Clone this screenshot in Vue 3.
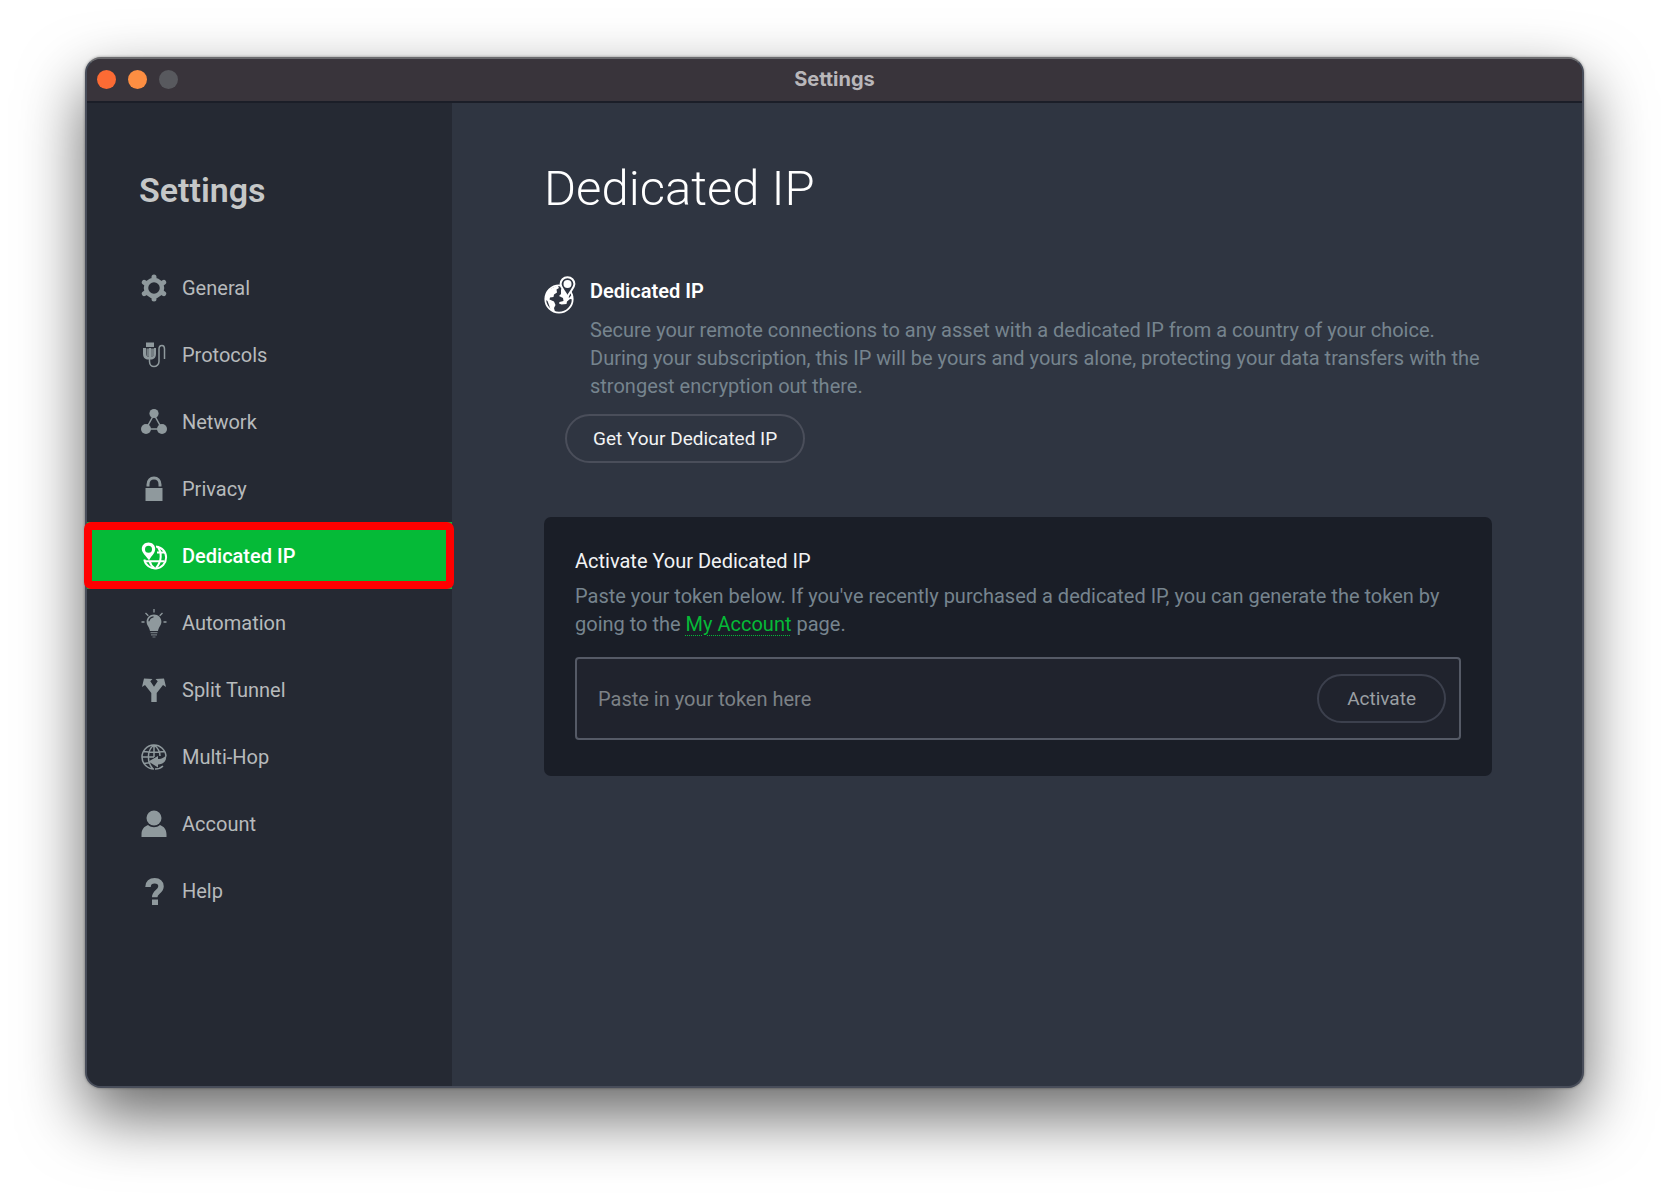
<script setup>
import { ref } from 'vue'

const token = ref('')
const active = ref('dedicated')
const items = [
  { id: 'general', label: 'General' },
  { id: 'protocols', label: 'Protocols' },
  { id: 'network', label: 'Network' },
  { id: 'privacy', label: 'Privacy' },
  { id: 'dedicated', label: 'Dedicated IP' },
  { id: 'automation', label: 'Automation' },
  { id: 'split', label: 'Split Tunnel' },
  { id: 'multihop', label: 'Multi-Hop' },
  { id: 'account', label: 'Account' },
  { id: 'help', label: 'Help' },
]
</script>

<template>
  <div class="desktop">
    <div class="window">
      <header class="titlebar">
        <div class="lights">
          <button class="light close" type="button" aria-label="Close"></button>
          <button class="light minimize" type="button" aria-label="Minimize"></button>
          <button class="light zoom" type="button" aria-label="Zoom" disabled></button>
        </div>
        <span class="caption">Settings</span>
      </header>

      <div class="body">
        <aside class="sidebar">
          <h2 class="heading">Settings</h2>
          <nav class="nav">
            <a
              v-for="item in items"
              :key="item.id"
              href="#"
              class="item"
              :class="{ active: item.id === active }"
              @click.prevent="active = item.id"
            >
              <svg class="icon" viewBox="0 0 28 32" aria-hidden="true">
                <g v-if="item.id === 'general'" fill="none" stroke="currentColor">
                  <circle cx="14" cy="16" r="8" stroke-width="4.500" />
                  <path d="M14 6.500V5M14 25.500V27M5.800 11.300 4.300 10.400M22.200 20.700l1.500.9M5.800 20.700l-1.500.9M22.200 11.300l1.500-.9" stroke-width="5" stroke-linecap="round" />
                </g>
                <g v-else-if="item.id === 'protocols'">
                  <path d="M6 3.500h8v4.500H6zM3 9h3v5.500c0 2 1.500 3.500 3 3.500V9h2v9c2 0 3-1.500 3-3.500V9h2v6c0 3-1.500 5-4 5.500H7c-2.500-.5-4-2.500-4-5.500z" />
                  <path d="M6.500 9.500h7.500v5.500c0 2-1 3-3 3h-1.500c-2 0-3-1-3-3z" opacity=".75" />
                  <path d="M9.500 20v2.500c0 3 2 5 4.500 5s5-2 5-5V10c0-2 1-3.500 3-3.500s2.500 1.500 2.500 3.500v10" fill="none" stroke="currentColor" stroke-width="1.500" />
                </g>
                <g v-else-if="item.id === 'network'">
                  <path d="M14 8.500 6 23h16z" fill="none" stroke="currentColor" stroke-width="1.500" />
                  <circle cx="14" cy="7.500" r="4.600" />
                  <circle cx="6" cy="23" r="5" />
                  <circle cx="22" cy="23" r="5" />
                </g>
                <g v-else-if="item.id === 'privacy'">
                  <path d="M8 13.500v-2c0-4 2.500-6.500 6-6.500s6 2.500 6 6.500v2" fill="none" stroke="currentColor" stroke-width="3" />
                  <path d="M5.500 15h17v13h-17z" />
                </g>
                <g v-else-if="item.id === 'dedicated'">
                  <path fill-rule="evenodd" d="M8.500 2.500c4 0 6.700 2.900 6.700 6.500 0 3.800-3.200 6.200-6.200 11.200C6 16 1.800 12.800 1.800 9c0-3.600 2.700-6.500 6.700-6.500zm0 3.200a3.500 3.500 0 1 0 0 7 3.500 3.500 0 0 0 0-7z" />
                  <g fill="none" stroke="currentColor" stroke-width="2">
                    <path d="M16 6.500A11 11 0 1 1 4.300 19.500" />
                    <path d="M17.500 6.500c4.500 5.500 4.500 15-1.500 21.500M9.500 21c.8 3 2.500 5.500 5 7M5 21.300h19.500M17 12.500h8" />
                  </g>
                </g>
                <g v-else-if="item.id === 'automation'">
                  <path fill-rule="evenodd" d="M14 7.500c4.300 0 7.400 3.200 7.400 7.200 0 3.800-2.900 5.300-3.400 9.300h-8c-.5-4-3.400-5.500-3.400-9.300 0-4 3.100-7.200 7.400-7.200zm-.5 1.800c-3 .2-5 2.200-5.200 5h1.200c.2-2.200 1.700-3.700 4-3.900z" />
                  <path d="M10.500 25h7v1.300h-7zM11 27.200h6v1.300h-6zM12.500 29.400h3v1h-3z" opacity=".7" />
                  <path d="M14 2v3.500M5.500 6l2.800 2.800M22.500 6l-2.800 2.800M1.500 15h3M23.500 15h3" fill="none" stroke="currentColor" stroke-width="1.300" />
                </g>
                <g v-else-if="item.id === 'split'">
                  <path d="M4 4.500 12.500 5 10.300 7.200 14 12.800l3.700-5.600L15.500 5l8.500-.5L26 13l-3-2-6.300 8V28h-5.400v-9L5 11l-3 2z" />
                </g>
                <g v-else-if="item.id === 'multihop'">
                  <g fill="none" stroke="currentColor" stroke-width="1.500">
                    <path d="M26 15.500A12 12 0 1 0 14 28M3.500 10.500c7 1 14 1 21 0M2 16h12M4 22.500l5-.7M14 4v12M14 4c-7 5-7.500 17-1 24M14 4c4 3 6 7 6 11" />
                  </g>
                  <path d="m8.500 20.500 9.500-5.500v3c3 .5 5.500-1 8-3.500 1 5-2 8.500-8 9v3z" />
                  <path d="M15 28c3 0 6-1 8-3" fill="none" stroke="currentColor" stroke-width="1.500" />
                </g>
                <g v-else-if="item.id === 'account'">
                  <circle cx="14" cy="10" r="7.500" />
                  <path d="M1.500 29v-2.500c0-5 2.500-8 6.500-9.500 3.500 3 8.500 3 12 0 4 1.500 6.500 4.500 6.500 9.500V29z" />
                </g>
                <g v-else>
                  <path d="M8 12c0-4 2.600-6.200 6.700-6.200 4 0 6.300 2 6.300 5.400 0 5.600-6.300 5.600-6.300 11.100" fill="none" stroke="currentColor" stroke-width="5.500" />
                  <path d="M12 24.500h6V30h-6z" />
                </g>
              </svg>
              <span>{{ item.label }}</span>
            </a>
          </nav>
        </aside>

        <main class="content">
          <h1 class="title">Dedicated IP</h1>

          <section class="feature">
            <svg class="globe" viewBox="0 0 32 38" aria-hidden="true">
              <circle cx="15" cy="23" r="13.700" fill="none" stroke="currentColor" stroke-width="1.800" />
              <path d="M13.500 9.500 6 13c-3 2.500-5 6-5 10.500l2.500 1.500 1.500 4 1.500 4.500c2 1.500 3 2 4.500 2.500l-1-4 1.500-3-1.500-3.500-4.500-2 .5-2 3.500-.5.5-2.500 3-2-.5-3 2.500-1.500zM17 13c2 .5 3.500 2 4.500 4.500l3.500 4.500 3.500-4c.5 2 .7 3.500.2 5.500l-2.700-.5-3 2.500-.5 2.500-5 .5-2.500-1 .5-1.500 4-1-.5-3-4-2 2-2z" />
              <path class="pin" d="M23.500 1.200c4 0 6.900 3 6.900 6.900 0 4.400-4.700 6.600-6.900 13.400-2.200-6.800-6.900-9-6.900-13.400 0-3.900 2.900-6.900 6.900-6.900z" />
              <circle cx="23.500" cy="8" r="4" />
            </svg>
            <div class="copy">
              <h3 class="subtitle">Dedicated IP</h3>
              <p class="text">
                Secure your remote connections to any asset with a dedicated IP from a country of your choice.
                During your subscription, this IP will be yours and yours alone, protecting your data transfers with the
                strongest encryption out there.
              </p>
            </div>
          </section>
          <button class="pill get" type="button">Get Your Dedicated IP</button>

          <section class="card">
            <h3 class="card-title"><label for="token">Activate Your Dedicated IP</label></h3>
            <p class="text">
              Paste your token below. If you've recently purchased a dedicated IP, you can generate the token by
              going to the <a class="link" href="#">My Account</a> page.
            </p>
            <form class="field" @submit.prevent>
              <input id="token" v-model="token" class="input" type="text" placeholder="Paste in your token here" />
              <button class="pill submit" type="submit">Activate</button>
            </form>
          </section>
        </main>
      </div>
    </div>
  </div>
</template>

<style>
body {
  margin: 0;
  background: #fff;
}
</style>

<style scoped>
* {
  box-sizing: border-box;
}
h1,
h2,
h3,
p {
  margin: 0;
}
button,
input {
  font: inherit;
}
.desktop {
  display: flex;
  min-height: 100vh;
  padding: 57px 85px 112px;
  font-family: Roboto, "Liberation Sans", sans-serif;
  font-size: 20px;
  overflow: hidden;
}
.window {
  flex: 1;
  display: flex;
  flex-direction: column;
  border: 2px solid #484d5a;
  border-top-color: #6b6b6e;
  border-radius: 16px;
  background: #2f3541;
  box-shadow: 0 28px 64px rgba(0, 0, 0, 0.6), 0 0 3px rgba(0, 0, 0, 0.4);
}
.titlebar {
  display: grid;
  grid-template-columns: 1fr auto 1fr;
  align-items: center;
  height: 44px;
  padding: 0 10px 2px;
  background: #39343b;
  border-bottom: 2px solid #1b1e28;
  border-radius: 14px 14px 0 0;
}
.lights {
  display: flex;
  gap: 12px;
}
.light {
  width: 19px;
  height: 19px;
  padding: 0;
  border: 0;
  border-radius: 50%;
}
.close {
  background: #fc6b34;
}
.minimize {
  background: #fd8e42;
}
.zoom {
  background: #58595e;
}
.caption {
  font-family: Inter, "Liberation Sans", sans-serif;
  font-size: 20px;
  font-weight: 700;
  color: #b9b7ba;
}
.body {
  flex: 1;
  display: flex;
}
.sidebar {
  flex: 0 0 365px;
  padding-top: 67px;
  background: #252933;
  border-radius: 0 0 0 14px;
}
.heading {
  padding-left: 52px;
  font-size: 34px;
  font-weight: 600;
  line-height: 40px;
  color: #c5c7c8;
}
.nav {
  display: flex;
  flex-direction: column;
  margin-top: 44px;
}
.item {
  position: relative;
  display: flex;
  align-items: center;
  gap: 14px;
  height: 67px;
  padding-left: 53px;
  color: #b7babc;
  text-decoration: none;
}
.icon {
  width: 28px;
  height: 32px;
  color: #8f999d;
  fill: currentColor;
}
.item.active {
  background: #05ba37;
  color: #fff;
  font-weight: 500;
}
.item.active::after {
  content: "";
  position: absolute;
  inset: 0 -2px 0 -3px;
  border: 8px solid #f00;
  border-radius: 7px;
}
.item.active .icon {
  color: #fff;
}
.content {
  flex: 1;
  padding: 56px 90px 64px 92px;
}
.title {
  font-size: 49px;
  font-weight: 300;
  line-height: 60px;
  color: #fff;
}
.feature {
  display: flex;
  gap: 14px;
  margin-top: 56px;
}
.globe {
  flex: none;
  width: 32px;
  height: 38px;
  margin-top: 1px;
  color: #fff;
  fill: currentColor;
}
.pin {
  fill: #2f3541;
  stroke: currentColor;
  stroke-width: 2;
}
.subtitle {
  font-size: 20px;
  font-weight: 600;
  line-height: 32px;
  color: #fff;
}
.text {
  line-height: 28px;
  color: #76848e;
}
.copy .text {
  margin-top: 9px;
}
.pill {
  height: 49px;
  padding: 0 28px;
  border: 2px solid #4a4e5a;
  border-radius: 25px;
  background: transparent;
  font-size: 19px;
  white-space: nowrap;
}
.get {
  margin: 14px 0 0 21px;
  padding: 0 26px;
  color: #f2f3f4;
}
.card {
  margin-top: 54px;
  padding: 28px 31px 36px;
  border-radius: 7px;
  background: #1a1e27;
}
.card-title {
  font-size: 20px;
  font-weight: 400;
  line-height: 32px;
  color: #f2f3f4;
}
.card .text {
  margin-top: 5px;
}
.link {
  color: #05ba37;
  text-decoration: underline dotted 1px;
  text-underline-offset: 4px;
}
.field {
  display: flex;
  align-items: center;
  height: 83px;
  margin-top: 19px;
  padding: 0 13px 0 21px;
  border: 2px solid #555a66;
  border-radius: 4px;
  background: #20232d;
}
.input {
  flex: 1;
  min-width: 0;
  height: 48px;
  padding: 0;
  border: 0;
  outline: 0;
  background: transparent;
  color: #f2f3f4;
}
.input::placeholder {
  color: #7c8186;
  opacity: 1;
}
.submit {
  border-color: #3c404d;
  color: #9a9fa3;
}
</style>
